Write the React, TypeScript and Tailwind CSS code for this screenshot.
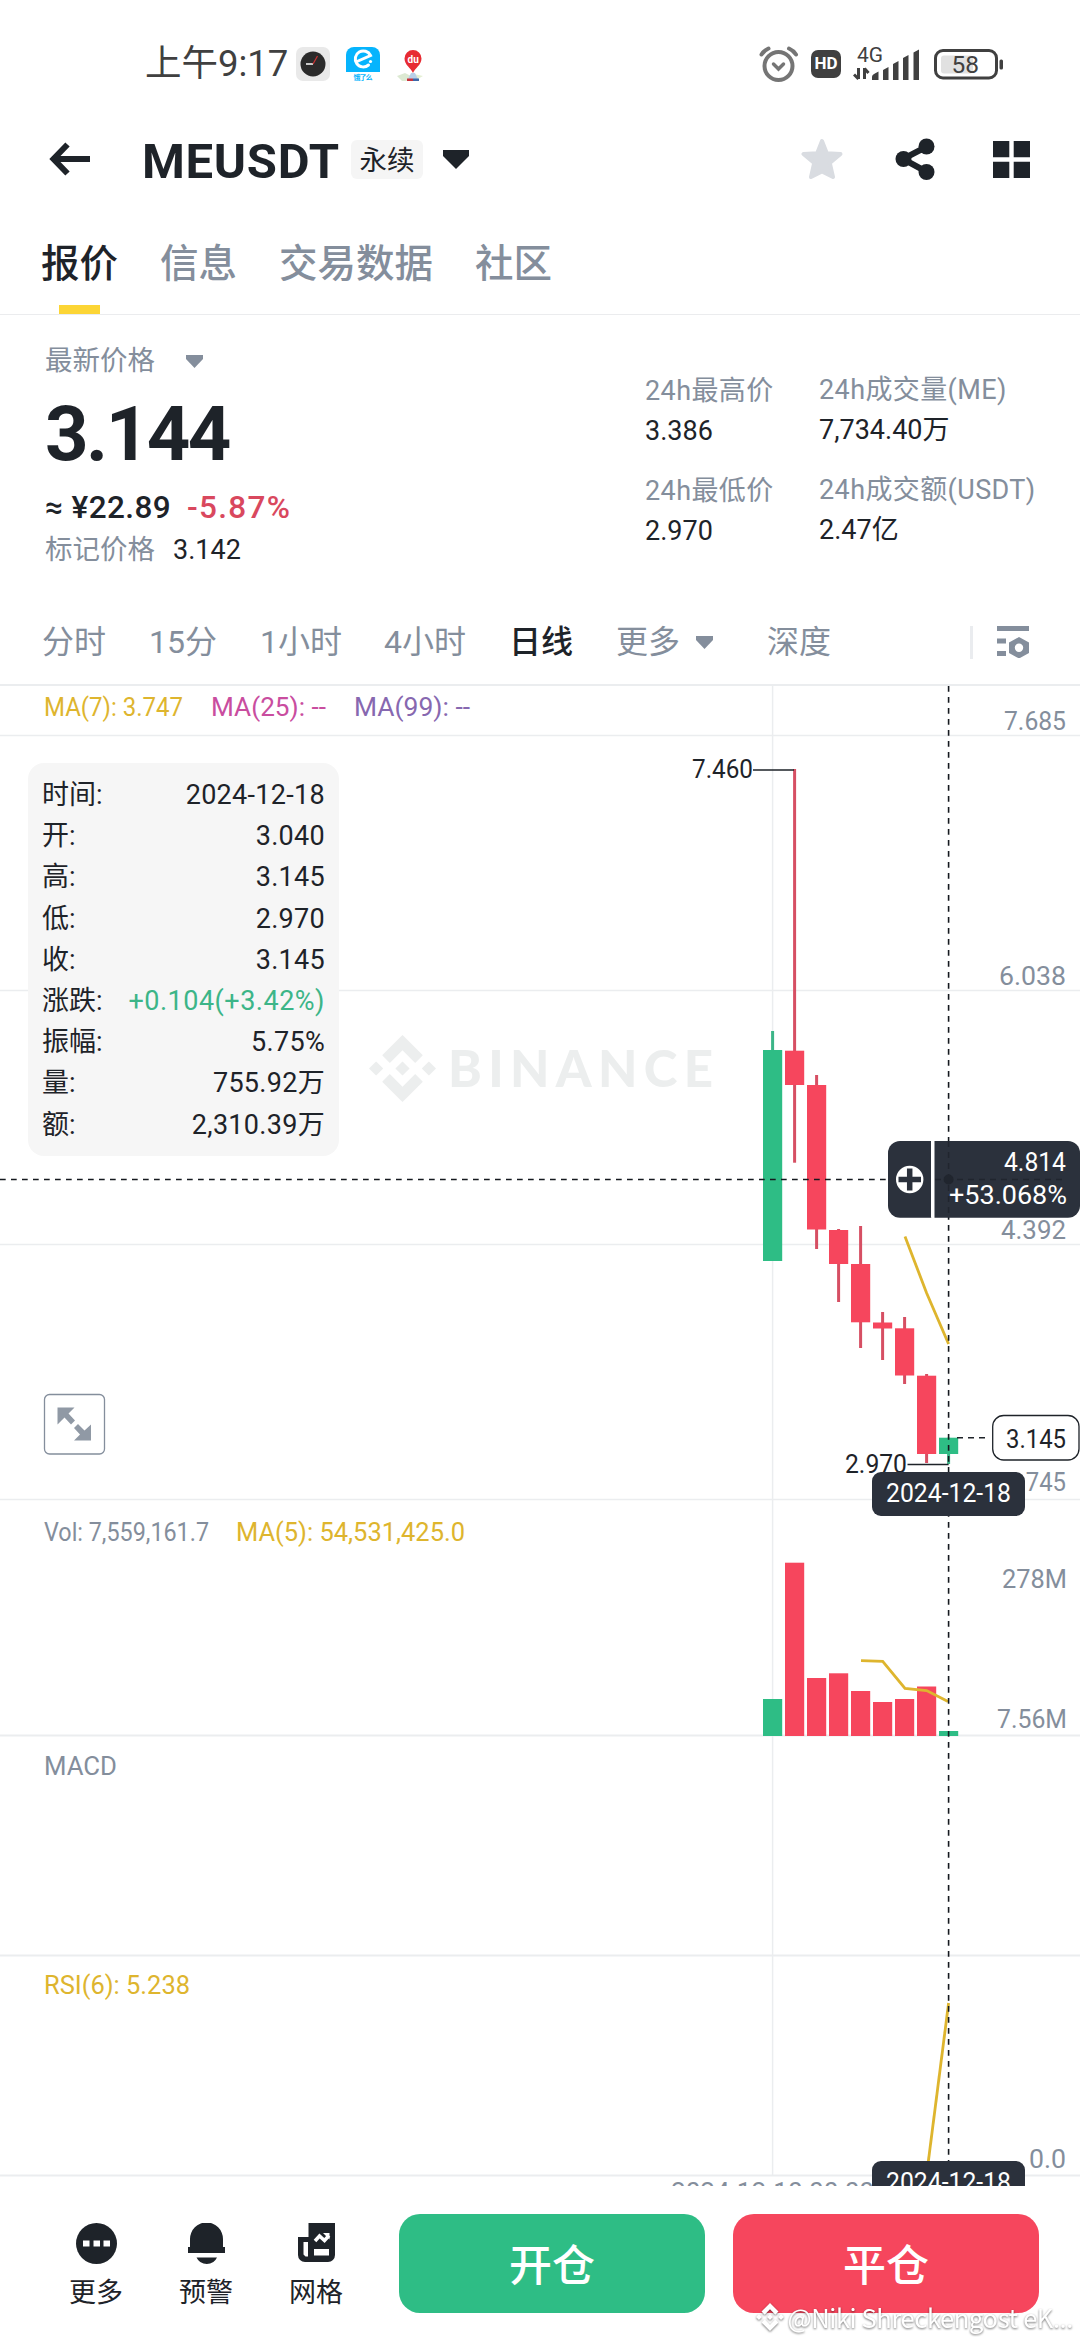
import React, { useState } from 'react';

interface Candle {
  high: number;
  low: number;
  top: number;
  bottom: number;
  volTop: number;
  up?: boolean;
}

const UP = '#2ebd85';
const DOWN = '#f6465d';
const GOLD = '#deb52e';
const MUTED = '#848e9c';
const INK = '#1e2329';
const TAG = '#2b313c';

// pixel values inside the chart svg (viewBox starts at y=684)
const candles: Candle[] = [
  { high: 1031, low: 1261, top: 1050, bottom: 1261, volTop: 1699, up: true },
  { high: 769, low: 1162.7, top: 1050.7, bottom: 1085, volTop: 1562.7 },
  { high: 1075, low: 1249, top: 1085, bottom: 1229.5, volTop: 1678 },
  { high: 1229, low: 1302, top: 1230, bottom: 1264, volTop: 1673.3 },
  { high: 1226, low: 1348, top: 1264, bottom: 1322.3, volTop: 1691 },
  { high: 1312, low: 1360, top: 1322.5, bottom: 1328.5, volTop: 1702 },
  { high: 1317, low: 1384, top: 1328.3, bottom: 1375.5, volTop: 1699 },
  { high: 1374, low: 1463, top: 1375.7, bottom: 1454, volTop: 1686.5 },
  { high: 1437.7, low: 1464, top: 1437.7, bottom: 1454, volTop: 1731, up: true },
];

const candleInfo = [
  ['时间:', '2024-12-18'],
  ['开:', '3.040'],
  ['高:', '3.145'],
  ['低:', '2.970'],
  ['收:', '3.145'],
  ['涨跌:', '+0.104(+3.42%)'],
  ['振幅:', '5.75%'],
  ['量:', '755.92万'],
  ['额:', '2,310.39万'],
];

interface LabelProps {
  x: number;
  y: number;
  w?: number;
  fill?: string;
  end?: boolean;
  size?: number;
  children: string;
}

function Label({ x, y, w, fill = MUTED, end, size = 26, children }: LabelProps) {
  return (
    <text
      x={x}
      y={y}
      fill={fill}
      fontSize={size}
      textAnchor={end ? 'end' : 'start'}
      textLength={w}
      lengthAdjust="spacingAndGlyphs"
    >
      {children}
    </text>
  );
}

function Caret({ className }: { className: string }) {
  return (
    <svg viewBox="0 0 26 19" preserveAspectRatio="none" className={className} fill="currentColor">
      <path d="M0 0h26v6L13 19 0 6z" />
    </svg>
  );
}

// four chevrons around a small square
function Diamond({ className }: { className?: string }) {
  return (
    <svg viewBox="0 0 66 66" className={className} fill="currentColor">
      <path d="M33 0 53 20 45.500 27.500 33 15 20.500 27.500 13 20z" />
      <path d="M33 66 53 46 45.500 38.500 33 51 20.500 38.500 13 46z" />
      <path d="M7 26l7 7-7 7-7-7zM59 26l7 7-7 7-7-7zM33 26l7 7-7 7-7-7z" />
    </svg>
  );
}

function StatusBar() {
  return (
    <div className="flex h-[100px] items-start pt-[46px] pl-[145px] text-[#404040]">
      <div className="flex h-9 w-[151px] items-center text-[36.5px] whitespace-nowrap">上午9:17</div>
      <svg width="134" height="36" viewBox="0 0 134 36">
        <rect x="0" y="1" width="34" height="34" rx="7" fill="#e9e9e9" />
        <circle cx="17" cy="18" r="12.500" fill="#2b2b2b" />
        <path d="M10 18h7" stroke="#fff" strokeWidth="1.500" />
        <path d="M17 18l4.500-8" stroke="#c33" strokeWidth="1.200" />
        <path d="M50 9a8 8 0 0 1 8-8h18a8 8 0 0 1 8 8v17H50z" fill="#06b4fd" />
        <path d="M61 15.500 74.500 9.500A8 8 0 1 0 72.500 19" fill="none" stroke="#fff" strokeWidth="3" strokeLinecap="round" />
        <circle cx="74.500" cy="15.500" r="1.600" fill="#fff" />
        <text x="57.500" y="34" fontSize="7" fontWeight="700" fill="#06b4fd" textLength="19">饿了么</text>
        <path d="M101 30l8-3 8 4-7 4h-4z" fill="#dce9d2" />
        <path d="M118 28l9 2-7 4z" fill="#e4efd3" />
        <path d="M111 35l4-8h4l4 8z" fill="#b9cfe8" />
        <rect x="111" y="32.500" width="6" height="2.500" fill="#c8323c" />
        <rect x="117" y="32.500" width="6" height="2.500" fill="#3d68a8" />
        <path d="M117 27c-2-5-8.500-8-8.500-14.500a8.500 8.500 0 0 1 17 0C125.500 19 119 22 117 27z" fill="#e72b33" />
        <text x="111.500" y="16.500" fontSize="10" fontWeight="700" fill="#fff">du</text>
      </svg>
      <div className="ml-auto flex w-[321px] items-start">
        <svg width="40" height="36" viewBox="0 0 40 36" fill="none" stroke="#757575">
          <circle cx="19.500" cy="20" r="14" strokeWidth="4" />
          <path d="M14.500 18l5 5 5-5" strokeWidth="3.500" strokeLinecap="round" />
          <path d="M2.500 8.500Q5 4.500 9.500 2.500M30 2.500q4.500 2 7 6" strokeWidth="4" strokeLinecap="round" />
        </svg>
        <div className="mt-1 ml-3 flex h-7 w-[30px] items-center justify-center rounded-[7px] bg-[#404040] text-[17px] font-bold text-white">
          HD
        </div>
        <svg width="70" height="36" viewBox="0 0 70 36" className="ml-3" fill="#404040">
          <text x="4" y="16" fontSize="21" textLength="26" lengthAdjust="spacingAndGlyphs">4G</text>
          <path d="M5.500 22v11M5.500 33l-4.500-4.500M11.500 33V22M11.500 22.500l4 4.500" stroke="#404040" strokeWidth="3" />
          <path d="M19 34v-3q0-2 2-3l4.500-2.500V34zM30 34V24l5.500-3v13zM40 34V18l5.500-3v19zM50 34V12l5.500-3v25zM60.500 34V6.500l5.500-3V34z" />
        </svg>
        <svg width="72" height="36" viewBox="0 0 72 36" className="ml-[11px]">
          <rect x="1.500" y="4.500" width="61" height="27.500" rx="7.500" fill="#fff" stroke="#404040" strokeWidth="3" />
          <rect x="7" y="9.500" width="32" height="18" rx="3" fill="#e1e1e1" />
          <rect x="65.500" y="13.500" width="3.500" height="10" rx="1.500" fill="#404040" />
          <text x="17.500" y="27" fontSize="24.500" fill="#404040">58</text>
        </svg>
      </div>
    </div>
  );
}

function Header() {
  return (
    <header className="flex h-[120px] items-center pb-0.5 pl-[49px] pr-[50px] text-[#1e2329]">
      <svg width="42" height="34" viewBox="0 0 42 34" fill="none" stroke="currentColor" strokeWidth="6">
        <path d="M18.500 2.500 4.500 17l14 14.500M4 17h37" />
      </svg>
      <h1 className="ml-[51px] w-[209px] pt-1 text-[49px] leading-none font-bold tracking-[0.7px] whitespace-nowrap">
        MEUSDT
      </h1>
      <span className="flex h-[39px] w-[72px] items-center justify-center rounded-md bg-[#f5f5f5] pt-[3px] text-[27.5px]">
        永续
      </span>
      <Caret className="ml-5 h-[19px] w-[26px]" />
      <div className="ml-auto flex items-center">
        <svg width="42" height="42" viewBox="0 0 42 42" fill="#d9dce1" stroke="#d9dce1" strokeWidth="4" strokeLinejoin="round">
          <path d="M21 3l4.800 12.200 13.700.8L28.800 25 32 39l-11-5.500L10 39l3.200-14L2.500 16l13.700-.8z" />
        </svg>
        <svg width="40" height="42" viewBox="0 0 40 42" className="ml-[52px]" fill="currentColor">
          <path d="M8 21 32 8.500M8 21l24 13" stroke="currentColor" strokeWidth="6" />
          <circle cx="8.500" cy="21" r="8" />
          <circle cx="31.500" cy="8.500" r="8" />
          <circle cx="31.500" cy="34" r="8" />
        </svg>
        <svg width="37" height="37" viewBox="0 0 37 37" className="ml-[58px]" fill="currentColor">
          <path d="M0 0h16.300v16.300H0zM20.700 0H37v16.300H20.700zM0 20.700h16.300V37H0zM20.700 20.700H37V37H20.700z" />
        </svg>
      </div>
    </header>
  );
}

function Tabs() {
  const [active, setActive] = useState('报价');
  return (
    <nav className="flex h-[95px] gap-[42px] border-b border-[#ebecee] pl-[41px]">
      {['报价', '信息', '交易数据', '社区'].map((tab) => (
        <button
          key={tab}
          onClick={() => setActive(tab)}
          className={`flex flex-col items-center justify-between pt-[3px] text-[38.5px] leading-[82px] font-medium ${
            tab === active ? 'text-[#1e2329]' : 'text-[#848e9c]'
          }`}
        >
          {tab}
          {tab === active && <span className="block h-[9px] w-[41px] shrink-0 bg-[#fcd535]" />}
        </button>
      ))}
    </nav>
  );
}

function Stat({ label, value }: { label: string; value: string }) {
  return (
    <div className="h-[100px] whitespace-nowrap text-[27px] leading-10">
      <div className="tracking-[0.4px] text-[#848e9c]">{label}</div>
      <div className="text-[#1e2329]">{value}</div>
    </div>
  );
}

function Summary() {
  return (
    <section className="flex h-[280px] pl-[45px]">
      <div className="w-[600px] pt-[26px] text-[#1e2329]">
        <div className="flex h-10 items-center text-[27.5px] text-[#848e9c]">
          最新价格
          <Caret className="ml-[31px] h-[13px] w-[17px]" />
        </div>
        <div className="mt-[11px] h-[84px] text-[76px] leading-[84px] font-bold tracking-[-2.5px]">3.144</div>
        <div className="mt-3 flex h-10 items-center text-[31.5px] font-medium">
          <span className="w-[142px] whitespace-nowrap tracking-[0.4px]">≈ ¥22.89</span>
          <span className="tracking-[1.3px] text-[#d9485e]">-5.87%</span>
        </div>
        <div className="mt-0.5 flex h-10 items-center text-[27.5px]">
          <span className="w-[128px] text-[#848e9c]">标记价格</span>
          <span className="text-[27px]">3.142</span>
        </div>
      </div>
      <div className="w-[174px] pt-[56px]">
        <Stat label="24h最高价" value="3.386" />
        <Stat label="24h最低价" value="2.970" />
      </div>
      <div className="pt-[55px]">
        <Stat label="24h成交量(ME)" value="7,734.40万" />
        <Stat label="24h成交额(USDT)" value="2.47亿" />
      </div>
    </section>
  );
}

function Intervals() {
  return (
    <div className="flex h-[89px] items-center pt-[5px] pl-[42px] pr-[51px] text-[32px] whitespace-nowrap text-[#848e9c]">
      <span className="w-[107px]">分时</span>
      <span className="w-[111px]">15分</span>
      <span className="w-[124px]">1小时</span>
      <span className="w-[125px]">4小时</span>
      <span className="w-[107px] font-medium text-[#1e2329]">日线</span>
      <span className="flex w-[151px] items-center">
        更多
        <Caret className="ml-4 h-[13px] w-[17px]" />
      </span>
      <span>深度</span>
      <span className="ml-auto h-[33px] w-[3px] bg-[#eaecef]" />
      <svg width="32" height="32" viewBox="0 0 32 32" className="ml-6" fill="currentColor">
        <path d="M0 0h32v5H0zM0 12.500h9v5H0zM0 25h9v5H0z" />
        <path fillRule="evenodd" d="M22 11l10 5.500v10.500L22 32.500 12 27V16.500zM22 17.500a4.200 4.200 0 1 0 0 8.400 4.200 4.200 0 0 0 0-8.400z" />
      </svg>
    </div>
  );
}

function PriceChart() {
  const centerX = (i: number) => 772.6 + i * 22;
  return (
    <svg viewBox="0 684 1080 1502" width="1080" height="1502" className="block">
      {/* grid */}
      <g stroke="#ebedef" strokeWidth="1.500">
        <path d="M0 735.5H1080M0 990.5H1080M0 1244.500H1080M0 1499.500H1080M772.600 686V2176" />
        <path d="M0 685H1080M0 1735.500H1080M0 1955.500H1080M0 2175.500H1080" strokeWidth="2.200" />
      </g>

      {/* watermark */}
      <svg x="369" y="1035" width="67" height="67">
        <g color="#eceeee"><Diamond /></g>
      </svg>
      <text x="448" y="1087" fontSize="51" fontWeight="900" fill="#eceeee" fontFamily="Lato, sans-serif" textLength="265">
        BINANCE
      </text>

      <Label x={44} y={716} w={139} fill={GOLD}>MA(7): 3.747</Label>
      <Label x={211} y={716} w={115} fill="#c94d9f">MA(25): --</Label>
      <Label x={354} y={716} w={116} fill="#8768b0">MA(99): --</Label>
      <Label x={44} y={1541} w={165}>Vol: 7,559,161.7</Label>
      <Label x={236} y={1541} w={229} fill={GOLD}>MA(5): 54,531,425.0</Label>
      <Label x={44} y={1775} w={73}>MACD</Label>
      <Label x={44} y={1994} w={146} fill={GOLD}>RSI(6): 5.238</Label>

      {/* axis */}
      <Label x={1066} y={730} w={62} end>7.685</Label>
      <Label x={1066} y={985} w={67} end>6.038</Label>
      <Label x={1066} y={1239} w={65} end>4.392</Label>
      <Label x={1066} y={1491} w={60} end>2.745</Label>
      <Label x={1067} y={1588} w={65} end>278M</Label>
      <Label x={1067} y={1728} w={70} end>7.56M</Label>
      <Label x={1066} y={2168} w={37} end>0.0</Label>
      <Label x={671} y={2201} w={203}>2024-12-10 00:00</Label>

      {/* candles and volume */}
      {candles.map((c, i) => (
        <g key={i} fill={c.up ? UP : DOWN}>
          <rect x={centerX(i) - 1.5} y={c.high} width="3" height={c.low - c.high} fill={c.up ? '#3cb588' : '#d64f63'} />
          <rect x={centerX(i) - 9.6} y={c.top} width="19.200" height={c.bottom - c.top} />
          <rect x={centerX(i) - 9.6} y={c.volTop} width="19.200" height={1736 - c.volTop} />
        </g>
      ))}

      <g fill="none" stroke={GOLD} strokeWidth="2.800">
        <path d="M905 1236.500 926.600 1293 948.600 1344" />
        <path d="M861 1660.700 882.700 1661.300 905 1688.500 926.600 1690.500 948 1701.500" />
        <path d="M948.600 2003 928 2164" />
      </g>

      <g stroke={INK} strokeWidth="1.400">
        <path d="M753 770H794M907.500 1464.500H948.600" />
        <path d="M957 1437.700H990" strokeDasharray="6 5" />
      </g>
      <Label x={692} y={778} w={61} fill={INK}>7.460</Label>
      <Label x={845} y={1473} w={62} fill={INK}>2.970</Label>

      {/* crosshair */}
      <g stroke="#15191f" strokeDasharray="5.700 5.300">
        <path d="M948.600 686V2186" strokeWidth="1.600" />
        <path d="M0 1179.500H1080" strokeWidth="1.600" />
      </g>

      {/* crosshair price */}
      <path d="M900 1141H931.500V1217.700H900a12 12 0 0 1-12-12V1153a12 12 0 0 1 12-12z" fill={TAG} />
      <path d="M931 1141H935V1217.700H931z" fill="#fff" />
      <path d="M934.500 1141H1068a12 12 0 0 1 12 12V1205.700a12 12 0 0 1-12 12H934.500z" fill={TAG} />
      <path d="M935 1179.500H1064M948.600 1141V1217" stroke="#20252e" strokeWidth="1.500" strokeDasharray="6 5" />
      <circle cx="948.600" cy="1179.500" r="5" fill="#20252e" />
      <circle cx="909.700" cy="1179.500" r="13.700" fill="#fff" />
      <path d="M898.500 1179.500H921M909.700 1168.500V1190.500" stroke={TAG} strokeWidth="5.500" />
      <Label x={1066} y={1171} w={62} end fill="#fff">4.814</Label>
      <Label x={1067} y={1204} w={118} end fill="#fff">+53.068%</Label>

      {/* last price */}
      <rect x="992.700" y="1415.500" width="86.300" height="44.500" rx="11" fill="#fff" stroke={INK} strokeWidth="1.300" />
      <Label x={1066} y={1448} w={60} end fill={INK}>3.145</Label>

      {/* crosshair date */}
      <rect x="872" y="1472" width="153" height="44" rx="9" fill={TAG} />
      <Label x={886} y={1502} w={125} fill="#fff">2024-12-18</Label>
      <rect x="872" y="2161" width="153" height="44" rx="9" fill={TAG} />
      <Label x={886} y={2191} w={125} fill="#fff">2024-12-18</Label>

      {/* fullscreen button */}
      <rect x="44.500" y="1394.500" width="60" height="59.500" rx="5" fill="#fff" stroke={MUTED} strokeWidth="1.300" />
      <path
        d="M57.500 1407.500h17l-6 6 6.500 7-4 4-6.500-7-7 7zM91 1440.500H74l6-6-6-6.500 4-4 6.500 6.500 6.500-6z"
        fill="#9099a5"
      />
    </svg>
  );
}

function CandlePanel() {
  return (
    <div className="absolute top-[79px] left-7 flex h-[393px] w-[311px] flex-col rounded-2xl bg-[#f6f6f6] px-[14px] pt-3 text-[27px] text-[#1e2329]">
      {candleInfo.map(([label, value]) => (
        <div key={label} className="flex h-[41.2px] items-center justify-between leading-none">
          <span>{label}</span>
          <span className={value.startsWith('+') ? 'tracking-[0.5px] text-[#3cb588]' : 'tracking-[0.3px]'}>{value}</span>
        </div>
      ))}
    </div>
  );
}

function BottomBar() {
  return (
    <footer className="relative flex h-[154px] pt-7 pl-[56px] pr-[41px] text-[#1e2329]">
      <div className="flex w-[343px] pt-[9px] text-[27px] leading-[36px]">
        <div className="flex w-[80px] flex-col items-center gap-[11px]">
          <svg width="41" height="41" viewBox="0 0 41 41">
            <circle cx="20.500" cy="20.500" r="20.500" fill="currentColor" />
            <path d="M7 17.500h6.500v6H7zM17.500 17.500H24v6h-6.500zM27.500 17.500H34v6h-6.500z" fill="#fff" />
          </svg>
          更多
        </div>
        <div className="ml-[30px] flex w-[80px] flex-col items-center gap-[11px]">
          <svg width="37" height="41" viewBox="0 0 37 41" fill="currentColor">
            <path d="M2 24V16a16.500 16.500 0 0 1 33 0v8h2v6H0v-6zM8.500 34.500h20.500q-3 6.500-10.200 6.500t-10.300-6.500z" />
          </svg>
          预警
        </div>
        <div className="ml-[30px] flex w-[80px] flex-col items-center gap-[11px]">
          <svg width="37" height="41" viewBox="0 0 37 41">
            <path d="M10.500 0H37v32a7 7 0 0 1-7 7H7a7 7 0 0 1-7-7V14h10.500z" fill="currentColor" />
            <path d="M5.500 19h4.500v14.500H7.500l-2-2zM16 26h15v6.500H16z" fill="#fff" />
            <path d="M17 18l4.500-5 5 4.500 4.500-5" fill="none" stroke="#fff" strokeWidth="3.500" />
            <path d="M25 10h6.500v6.500z" fill="#fff" />
          </svg>
          网格
        </div>
      </div>
      <button className="flex h-[99px] w-[306px] items-center justify-center rounded-[21px] bg-[#2ebd85] pt-1.5 text-[43px] font-medium text-white">
        开仓
      </button>
      <button className="ml-7 flex h-[99px] w-[306px] items-center justify-center rounded-[21px] bg-[#f6465d] pt-1.5 text-[43px] font-medium text-white">
        平仓
      </button>
      {/* author tag over the buttons */}
      <div className="absolute right-[7px] bottom-[5px] flex items-center text-[25.5px] leading-9 tracking-[-0.4px] whitespace-nowrap text-white [filter:drop-shadow(0_1px_1px_rgba(0,0,0,0.55))]">
        <Diamond className="mr-1 h-7 w-7" />
        <span className="font-['Noto_Sans_CJK_SC']">@Niki Shreckengost eK...</span>
      </div>
    </footer>
  );
}

export default function App() {
  return (
    <main className="h-[2340px] w-[1080px] overflow-hidden bg-white font-[Roboto,'Noto_Sans_CJK_SC',sans-serif]">
      <StatusBar />
      <Header />
      <Tabs />
      <Summary />
      <Intervals />
      <section className="relative h-[1502px] overflow-hidden">
        <PriceChart />
        <CandlePanel />
      </section>
      <BottomBar />
    </main>
  );
}
